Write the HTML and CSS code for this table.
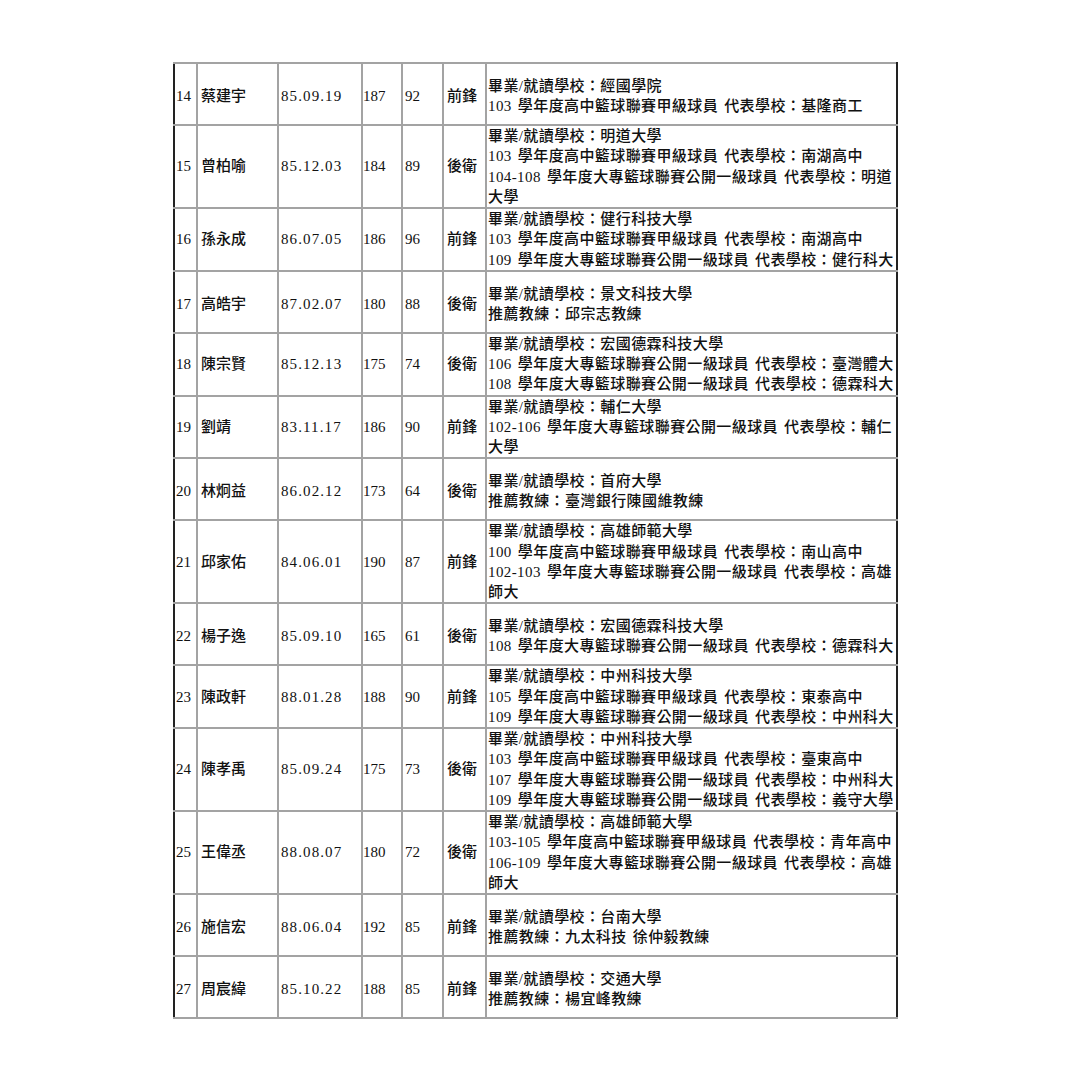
FILE: index.html
```html
<!DOCTYPE html>
<html lang="zh-Hant">
<head>
<meta charset="utf-8">
<title>球員名單</title>
<link rel="stylesheet" href="styles.css">
</head>
<body>
<div class="page">
<table class="roster">
<colgroup>
<col class="c-no"><col class="c-name"><col class="c-date"><col class="c-h"><col class="c-w"><col class="c-pos"><col class="c-note">
</colgroup>
<tbody>
<tr class="pair"><td class="no">14</td><td class="name">蔡建宇</td><td class="date">85.09.19</td><td class="h">187</td><td class="w">92</td><td class="pos">前鋒</td><td class="note"><div class="ln">畢業/就讀學校：經國學院</div><div class="ln">103 學年度高中籃球聯賽甲級球員 代表學校：基隆商工</div></td></tr>
<tr><td class="no">15</td><td class="name">曾柏喻</td><td class="date">85.12.03</td><td class="h">184</td><td class="w">89</td><td class="pos">後衛</td><td class="note"><div class="ln">畢業/就讀學校：明道大學</div><div class="ln">103 學年度高中籃球聯賽甲級球員 代表學校：南湖高中</div><div class="ln">104-108 學年度大專籃球聯賽公開一級球員 代表學校：明道</div><div class="ln">大學</div></td></tr>
<tr><td class="no">16</td><td class="name">孫永成</td><td class="date">86.07.05</td><td class="h">186</td><td class="w">96</td><td class="pos">前鋒</td><td class="note"><div class="ln">畢業/就讀學校：健行科技大學</div><div class="ln">103 學年度高中籃球聯賽甲級球員 代表學校：南湖高中</div><div class="ln">109 學年度大專籃球聯賽公開一級球員 代表學校：健行科大</div></td></tr>
<tr class="pair"><td class="no">17</td><td class="name">高皓宇</td><td class="date">87.02.07</td><td class="h">180</td><td class="w">88</td><td class="pos">後衛</td><td class="note"><div class="ln">畢業/就讀學校：景文科技大學</div><div class="ln">推薦教練：邱宗志教練</div></td></tr>
<tr><td class="no">18</td><td class="name">陳宗賢</td><td class="date">85.12.13</td><td class="h">175</td><td class="w">74</td><td class="pos">後衛</td><td class="note"><div class="ln">畢業/就讀學校：宏國德霖科技大學</div><div class="ln">106 學年度大專籃球聯賽公開一級球員 代表學校：臺灣體大</div><div class="ln">108 學年度大專籃球聯賽公開一級球員 代表學校：德霖科大</div></td></tr>
<tr><td class="no">19</td><td class="name">劉靖</td><td class="date">83.11.17</td><td class="h">186</td><td class="w">90</td><td class="pos">前鋒</td><td class="note"><div class="ln">畢業/就讀學校：輔仁大學</div><div class="ln">102-106 學年度大專籃球聯賽公開一級球員 代表學校：輔仁</div><div class="ln">大學</div></td></tr>
<tr class="pair"><td class="no">20</td><td class="name">林炯益</td><td class="date">86.02.12</td><td class="h">173</td><td class="w">64</td><td class="pos">後衛</td><td class="note"><div class="ln">畢業/就讀學校：首府大學</div><div class="ln">推薦教練：臺灣銀行陳國維教練</div></td></tr>
<tr><td class="no">21</td><td class="name">邱家佑</td><td class="date">84.06.01</td><td class="h">190</td><td class="w">87</td><td class="pos">前鋒</td><td class="note"><div class="ln">畢業/就讀學校：高雄師範大學</div><div class="ln">100 學年度高中籃球聯賽甲級球員 代表學校：南山高中</div><div class="ln">102-103 學年度大專籃球聯賽公開一級球員 代表學校：高雄</div><div class="ln">師大</div></td></tr>
<tr class="pair"><td class="no">22</td><td class="name">楊子逸</td><td class="date">85.09.10</td><td class="h">165</td><td class="w">61</td><td class="pos">後衛</td><td class="note"><div class="ln">畢業/就讀學校：宏國德霖科技大學</div><div class="ln">108 學年度大專籃球聯賽公開一級球員 代表學校：德霖科大</div></td></tr>
<tr><td class="no">23</td><td class="name">陳政軒</td><td class="date">88.01.28</td><td class="h">188</td><td class="w">90</td><td class="pos">前鋒</td><td class="note"><div class="ln">畢業/就讀學校：中州科技大學</div><div class="ln">105 學年度高中籃球聯賽甲級球員 代表學校：東泰高中</div><div class="ln">109 學年度大專籃球聯賽公開一級球員 代表學校：中州科大</div></td></tr>
<tr><td class="no">24</td><td class="name">陳孝禹</td><td class="date">85.09.24</td><td class="h">175</td><td class="w">73</td><td class="pos">後衛</td><td class="note"><div class="ln">畢業/就讀學校：中州科技大學</div><div class="ln">103 學年度高中籃球聯賽甲級球員 代表學校：臺東高中</div><div class="ln">107 學年度大專籃球聯賽公開一級球員 代表學校：中州科大</div><div class="ln">109 學年度大專籃球聯賽公開一級球員 代表學校：義守大學</div></td></tr>
<tr><td class="no">25</td><td class="name">王偉丞</td><td class="date">88.08.07</td><td class="h">180</td><td class="w">72</td><td class="pos">後衛</td><td class="note"><div class="ln">畢業/就讀學校：高雄師範大學</div><div class="ln">103-105 學年度高中籃球聯賽甲級球員 代表學校：青年高中</div><div class="ln">106-109 學年度大專籃球聯賽公開一級球員 代表學校：高雄</div><div class="ln">師大</div></td></tr>
<tr class="pair"><td class="no">26</td><td class="name">施信宏</td><td class="date">88.06.04</td><td class="h">192</td><td class="w">85</td><td class="pos">前鋒</td><td class="note"><div class="ln">畢業/就讀學校：台南大學</div><div class="ln">推薦教練：九太科技 徐仲毅教練</div></td></tr>
<tr class="pair"><td class="no">27</td><td class="name">周宸緯</td><td class="date">85.10.22</td><td class="h">188</td><td class="w">85</td><td class="pos">前鋒</td><td class="note"><div class="ln">畢業/就讀學校：交通大學</div><div class="ln">推薦教練：楊宜峰教練</div></td></tr>
</tbody>
</table>
</div>
</body>
</html>
```
FILE: styles.css
```css
html, body {
  margin: 0;
  padding: 0;
  background: #ffffff;
}
.page {
  padding: 62px 0 0 173px;
}
.roster {
  border-collapse: collapse;
  table-layout: fixed;
  width: 723px;
  font-family: "Liberation Serif", "Noto Sans CJK TC", serif;
  font-size: 15px;
  font-weight: 500;
  line-height: 20.25px;
  color: #111111;
  border-left: 2px solid #222;
  border-right: 2px solid #222;
  border-top: 2px solid #9c9c9c;
  border-bottom: 2px solid #9c9c9c;
}
.c-no { width: 23px; }
.c-name { width: 81px; }
.c-date { width: 84px; }
.c-h { width: 40px; }
.c-w { width: 41px; }
.c-pos { width: 43px; }
.c-note { width: 411px; }
.roster td {
  border: 2px solid #a3a3a3;
  height: 60px;
  padding: 0 0 0 2px;
  vertical-align: middle;
  white-space: nowrap;
  overflow: hidden;
}
.roster tr.pair td {
  height: 56px;
  padding-top: 4px;
}
.roster td:first-child { border-left: 2px solid #222; }
.roster td:last-child { border-right: 2px solid #222; }
.roster td.no { padding-left: 1px; }
.roster td.name { padding-left: 3px; }
.roster td.date { padding-left: 2px; letter-spacing: 1.1px; }
.roster td.h { padding-left: 0; }
.roster td.w { padding-left: 2px; }
.roster td.pos { padding-left: 3px; }
.roster td.note {
  padding-left: 1px;
  letter-spacing: 0.4px;
  word-spacing: 2px;
}
.ln {
  height: 20.25px;
  overflow: hidden;
}
```
